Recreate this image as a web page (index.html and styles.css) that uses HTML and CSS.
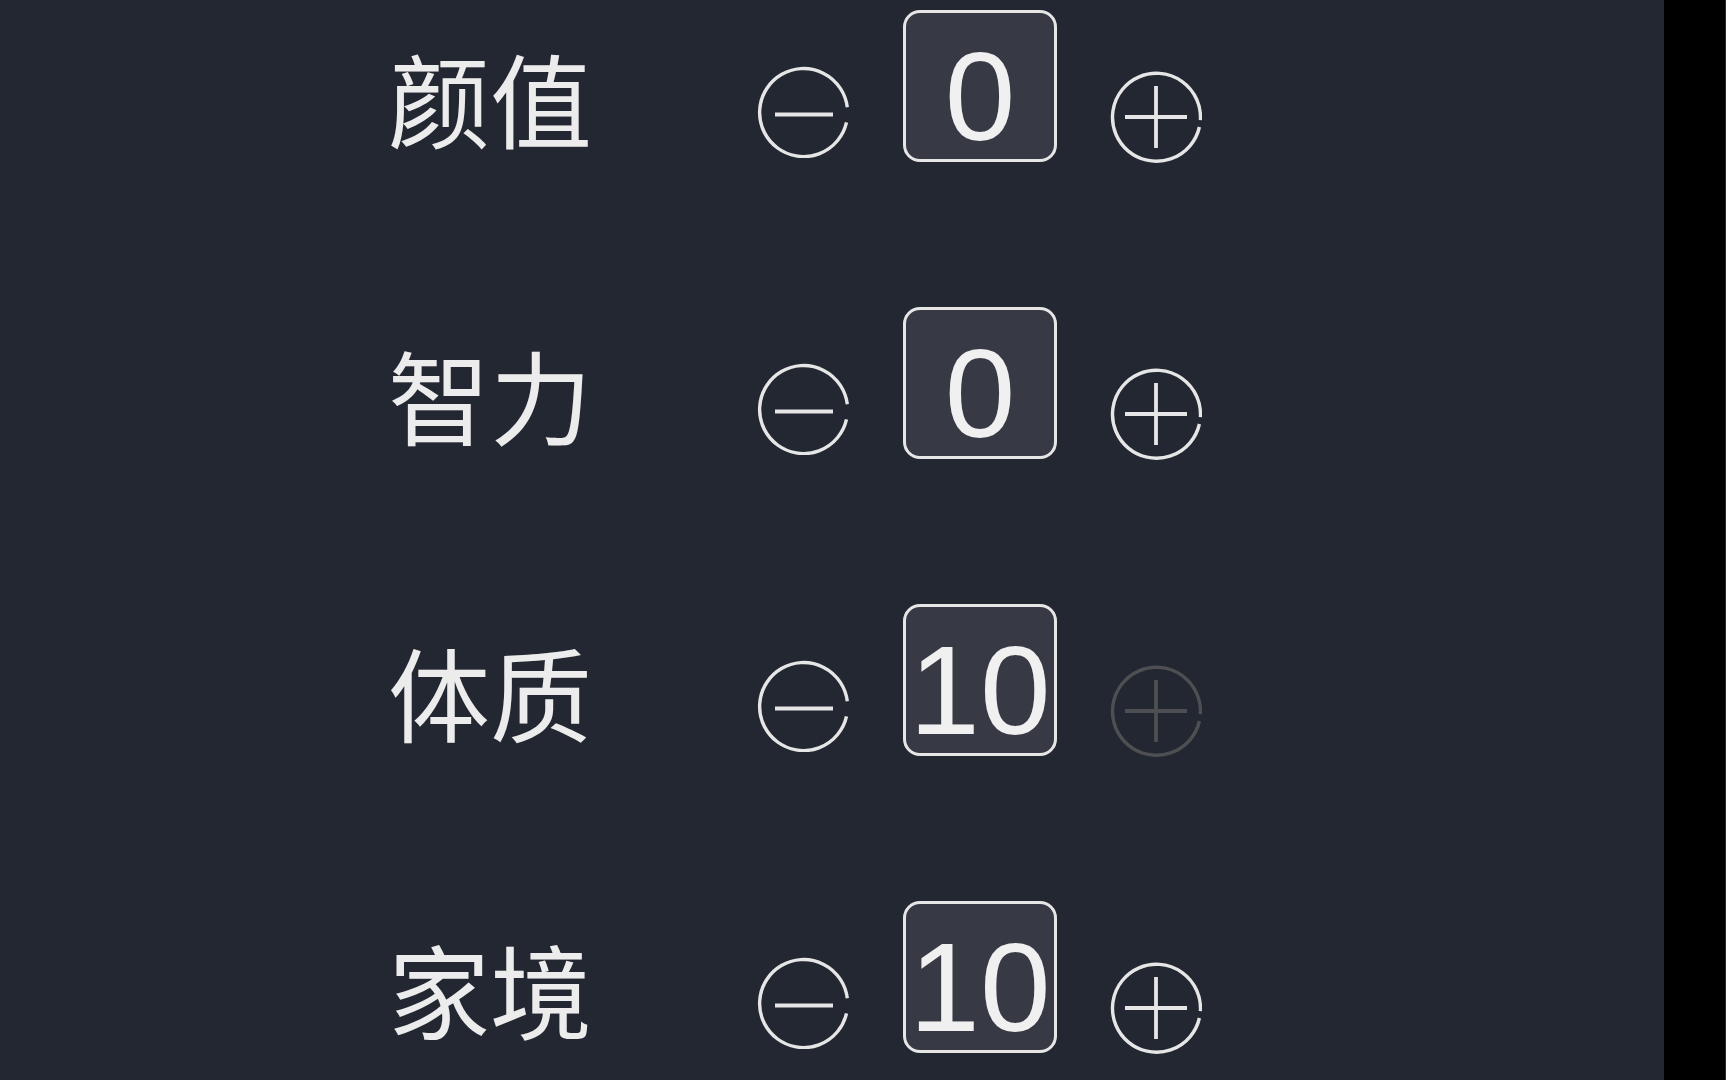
FILE: index.html
```html
<!DOCTYPE html>
<html lang="zh-CN">
<head>
<meta charset="utf-8">
<title>属性分配</title>
<link rel="stylesheet" href="styles.css">
</head>
<body>
<div class="screen">
  <main class="panel">
    <div class="row">
      <span class="label">颜值</span>
      <button class="step minus" aria-label="减少">
        <svg viewBox="0 0 92 92"><path d="M89.5 56.4 A44 44 0 1 1 90.3 41.3" /><path class="bar" d="M18 48.5 H76" /></svg>
      </button>
      <span class="value">0</span>
      <button class="step plus" aria-label="增加">
        <svg viewBox="0 0 92 92"><path d="M89.4 56.0 A44 44 0 1 1 90.4 49.1" /><path class="bar" d="M46 15 V77 M15 46 H77" /></svg>
      </button>
    </div>
    <div class="row">
      <span class="label">智力</span>
      <button class="step minus" aria-label="减少">
        <svg viewBox="0 0 92 92"><path d="M89.5 56.4 A44 44 0 1 1 90.3 41.3" /><path class="bar" d="M18 48.5 H76" /></svg>
      </button>
      <span class="value">0</span>
      <button class="step plus" aria-label="增加">
        <svg viewBox="0 0 92 92"><path d="M89.4 56.0 A44 44 0 1 1 90.4 49.1" /><path class="bar" d="M46 15 V77 M15 46 H77" /></svg>
      </button>
    </div>
    <div class="row">
      <span class="label">体质</span>
      <button class="step minus" aria-label="减少">
        <svg viewBox="0 0 92 92"><path d="M89.5 56.4 A44 44 0 1 1 90.3 41.3" /><path class="bar" d="M18 48.5 H76" /></svg>
      </button>
      <span class="value">10</span>
      <button class="step plus disabled" aria-label="增加" disabled>
        <svg viewBox="0 0 92 92"><path d="M89.4 56.0 A44 44 0 1 1 90.4 49.1" /><path class="bar" d="M46 15 V77 M15 46 H77" /></svg>
      </button>
    </div>
    <div class="row">
      <span class="label">家境</span>
      <button class="step minus" aria-label="减少">
        <svg viewBox="0 0 92 92"><path d="M89.5 56.4 A44 44 0 1 1 90.3 41.3" /><path class="bar" d="M18 48.5 H76" /></svg>
      </button>
      <span class="value">10</span>
      <button class="step plus" aria-label="增加">
        <svg viewBox="0 0 92 92"><path d="M89.4 56.0 A44 44 0 1 1 90.4 49.1" /><path class="bar" d="M46 15 V77 M15 46 H77" /></svg>
      </button>
    </div>
  </main>
  <aside class="edge"></aside>
</div>
</body>
</html>
```
FILE: styles.css
```css
html, body {
  margin: 0;
  padding: 0;
  height: 100%;
  overflow: hidden;
}

body {
  background: #222731;
  color: #e8e8e8;
}

.screen {
  display: flex;
  height: 100vh;
}

.panel {
  flex: 1;
  background: #222731;
  padding-left: 388px;
  display: flex;
  flex-direction: column;
  overflow: hidden;
}

.edge {
  width: 61px;
  background: #000;
  border-right: 1px solid #2a2a2a;
}

.row {
  display: flex;
  align-items: flex-start;
  height: 297px;
  flex-shrink: 0;
}

.label {
  display: block;
  width: 369px;
  margin-top: 46px;
  font-family: "Noto Sans CJK SC", "Noto Sans", sans-serif;
  font-size: 102px;
  line-height: 1;
  color: #ececec;
}

.step {
  display: block;
  width: 92px;
  height: 92px;
  padding: 0;
  border: 0;
  background: none;
  cursor: pointer;
}

.step svg {
  display: block;
  width: 92px;
  height: 92px;
  fill: none;
  stroke: #e6e6e6;
  stroke-width: 3.4;
}

.step svg .bar {
  stroke-width: 3.8;
}

.minus {
  margin-top: 66px;
}

.plus {
  margin-top: 71px;
  margin-left: 53px;
}

.plus.disabled svg {
  stroke: #4e4f52;
}

.value {
  display: block;
  box-sizing: border-box;
  width: 154px;
  height: 152px;
  margin-top: 10px;
  margin-left: 54px;
  padding-top: 20px;
  border: 3.5px solid #e6e6e6;
  border-radius: 17px;
  background: #373a44;
  font-family: "Liberation Sans", Arial, sans-serif;
  font-size: 127px;
  line-height: 1;
  text-align: center;
  color: #f0f0f0;
  white-space: nowrap;
}
```
